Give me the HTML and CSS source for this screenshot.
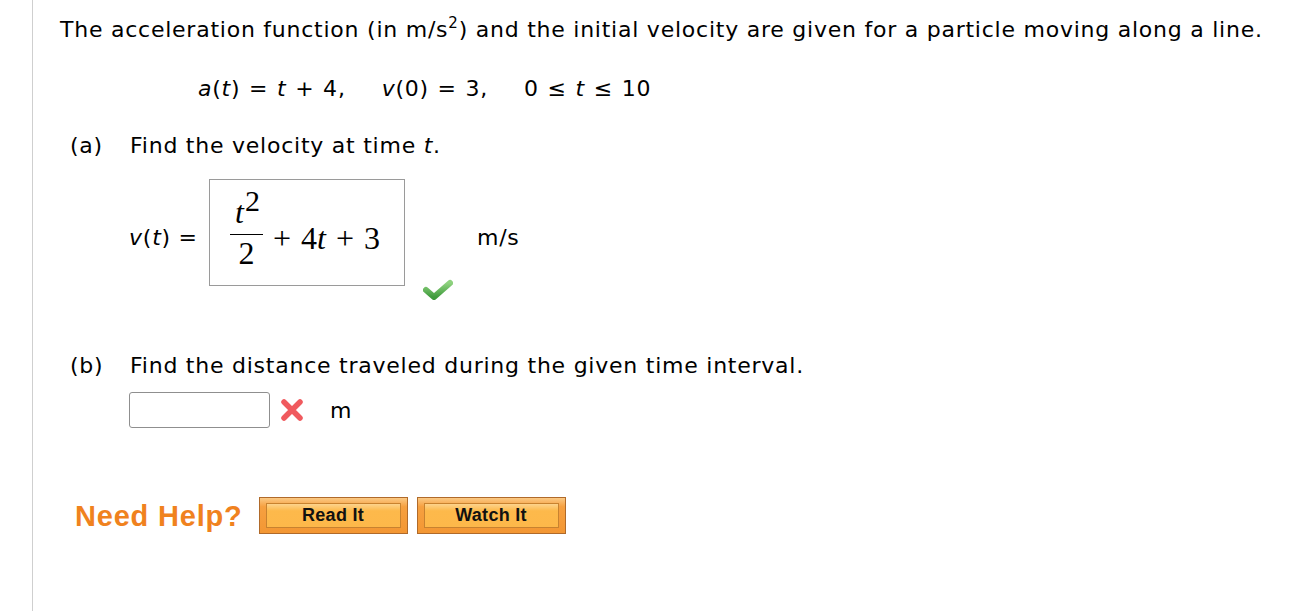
FILE: index.html
```html
<!DOCTYPE html>
<html>
<head>
<meta charset="utf-8">
<link rel="stylesheet" href="styles.css">
</head>
<body>
<div class="page">
  <p class="intro">The acceleration function (in m/s<sup>2</sup>) and the initial velocity are given for a particle moving along a line.</p>
  <p class="given"><span class="g"><i>a</i>(<i>t</i>) = <i>t</i> + 4,</span><span class="g"><i>v</i>(0) = 3,</span><span class="g">0 ≤ <i>t</i> ≤ 10</span></p>

  <div class="part">
    <span class="plabel">(a)</span><span>Find the velocity at time <i>t</i>.</span>
  </div>
  <div class="eqrow">
    <span class="eqlabel"><i>v</i>(<i>t</i>) =</span>
    <div class="mathbox">
      <span class="frac">
        <span class="num"><span class="mi">t</span><span class="msup">2</span></span>
        <span class="bar"></span>
        <span class="den">2</span>
      </span>
      <span class="rest"><span class="mo">+</span>4<span class="mi">t</span><span class="mo">+</span>3</span>
    </div>
    <svg class="check" width="30" height="22" viewBox="0 0 30 22">
      <defs>
        <linearGradient id="cg" x1="0" y1="0" x2="0" y2="1">
          <stop offset="0" stop-color="#8fd27f"/>
          <stop offset="1" stop-color="#3f9b3c"/>
        </linearGradient>
      </defs>
      <path d="M3 11 L11 18 L27 4" fill="none" stroke="url(#cg)" stroke-width="6" stroke-linecap="round" stroke-linejoin="round"/>
    </svg>
    <span class="unit">m/s</span>
  </div>

  <div class="part partb">
    <span class="plabel">(b)</span><span>Find the distance traveled during the given time interval.</span>
  </div>
  <div class="ansrow">
    <input class="answer" type="text">
    <svg class="cross" width="24" height="24" viewBox="0 0 24 24">
      <path d="M4 4 L20 20 M20 4 L4 20" fill="none" stroke="#f05a5e" stroke-width="5.5" stroke-linecap="round"/>
    </svg>
    <span class="unit2">m</span>
  </div>

  <div class="help">
    <span class="needhelp">Need Help?</span>
    <button class="hbtn"><span class="hin">Read It</span></button>
    <button class="hbtn"><span class="hin">Watch It</span></button>
  </div>
</div>
</body>
</html>
```
FILE: styles.css
```css
html, body {
  margin: 0;
  padding: 0;
  background: #fff;
}
body {
  font-family: "DejaVu Sans", Verdana, sans-serif;
  font-size: 22px;
  letter-spacing: 0.76px;
  color: #000;
}
.page {
  margin-left: 32px;
  border-left: 1px solid #cfcfcf;
  min-height: 611px;
  box-sizing: border-box;
  padding: 16px 0 0 27px;
}
p { margin: 0; }
.intro {
  line-height: 28px;
  white-space: nowrap;
}
sup {
  font-size: 15px;
  line-height: 0;
  vertical-align: 9px;
}
.given {
  line-height: 28px;
  margin: 31px 0 0 138px;
  word-spacing: 1px;
}
.g { margin-right: 36px; }
.part {
  display: flex;
  line-height: 28px;
  margin: 29px 0 0 10px;
}
.plabel { width: 60px; }
.eqrow {
  display: flex;
  align-items: flex-start;
  margin: 19px 0 0 69px;
  height: 107px;
}
.eqlabel {
  line-height: 28px;
  margin-top: 45px;
  width: 80px;
  white-space: nowrap;
}
.mathbox {
  box-sizing: border-box;
  width: 196px;
  height: 107px;
  border: 1px solid #9a9a9a;
  display: flex;
  align-items: center;
  padding-left: 20px;
  font-family: "Liberation Serif", "DejaVu Serif", serif;
  font-size: 32px;
  letter-spacing: 0;
}
.frac {
  display: flex;
  flex-direction: column;
  align-items: center;
  width: 33px;
}
.num {
  line-height: 30px;
  height: 32px;
  padding-left: 2px;
}
.mi { font-style: italic; }
.msup {
  font-size: 30px;
  vertical-align: 12px;
  line-height: 0;
  margin-left: 1px;
}
.bar {
  width: 33px;
  height: 1px;
  background: #000;
  margin: 5px 0 3px;
}
.den { line-height: 30px; }
.rest {
  margin-left: 0;
  margin-top: 10px;
  line-height: 28px;
  white-space: nowrap;
}
.mo { margin: 0 10px; }
.check {
  margin: 100px 0 0 18px;
}
.unit {
  line-height: 28px;
  margin: 45px 0 0 24px;
}
.partb { margin-top: 66px; }
.ansrow {
  display: flex;
  align-items: center;
  margin: 12px 0 0 69px;
}
.answer {
  box-sizing: border-box;
  width: 141px;
  height: 36px;
  border: 1px solid #8f8f8f;
  border-radius: 3px;
  margin: 0;
  padding: 0;
  background: #fff;
}
.cross { margin-left: 10px; }
.unit2 {
  margin-left: 26px;
  line-height: 28px;
  margin-top: 2px;
}
.help {
  display: flex;
  align-items: center;
  margin: 69px 0 0 15px;
}
.needhelp {
  font-family: "Liberation Sans", Arial, sans-serif;
  font-weight: bold;
  font-size: 29px;
  letter-spacing: 0.8px;
  color: #f0821e;
  margin-right: 16px;
  margin-top: 2px;
}
.hbtn {
  box-sizing: border-box;
  width: 149px;
  height: 37px;
  margin: 0 9px 0 0;
  padding: 5px 6px;
  border: 1px solid #b06a2a;
  background: linear-gradient(#fbc984 0, #f6a040 25%, #f39733 100%);
  display: flex;
}
.hin {
  flex: 1;
  display: flex;
  align-items: center;
  justify-content: center;
  border: 1px solid #c8822f;
  background: linear-gradient(#fdd38c 0, #fdb94b 30%, #fdb84a 100%);
  font-family: "Liberation Sans", Arial, sans-serif;
  font-weight: bold;
  font-size: 18px;
  letter-spacing: 0.3px;
  color: #111;
}
```
